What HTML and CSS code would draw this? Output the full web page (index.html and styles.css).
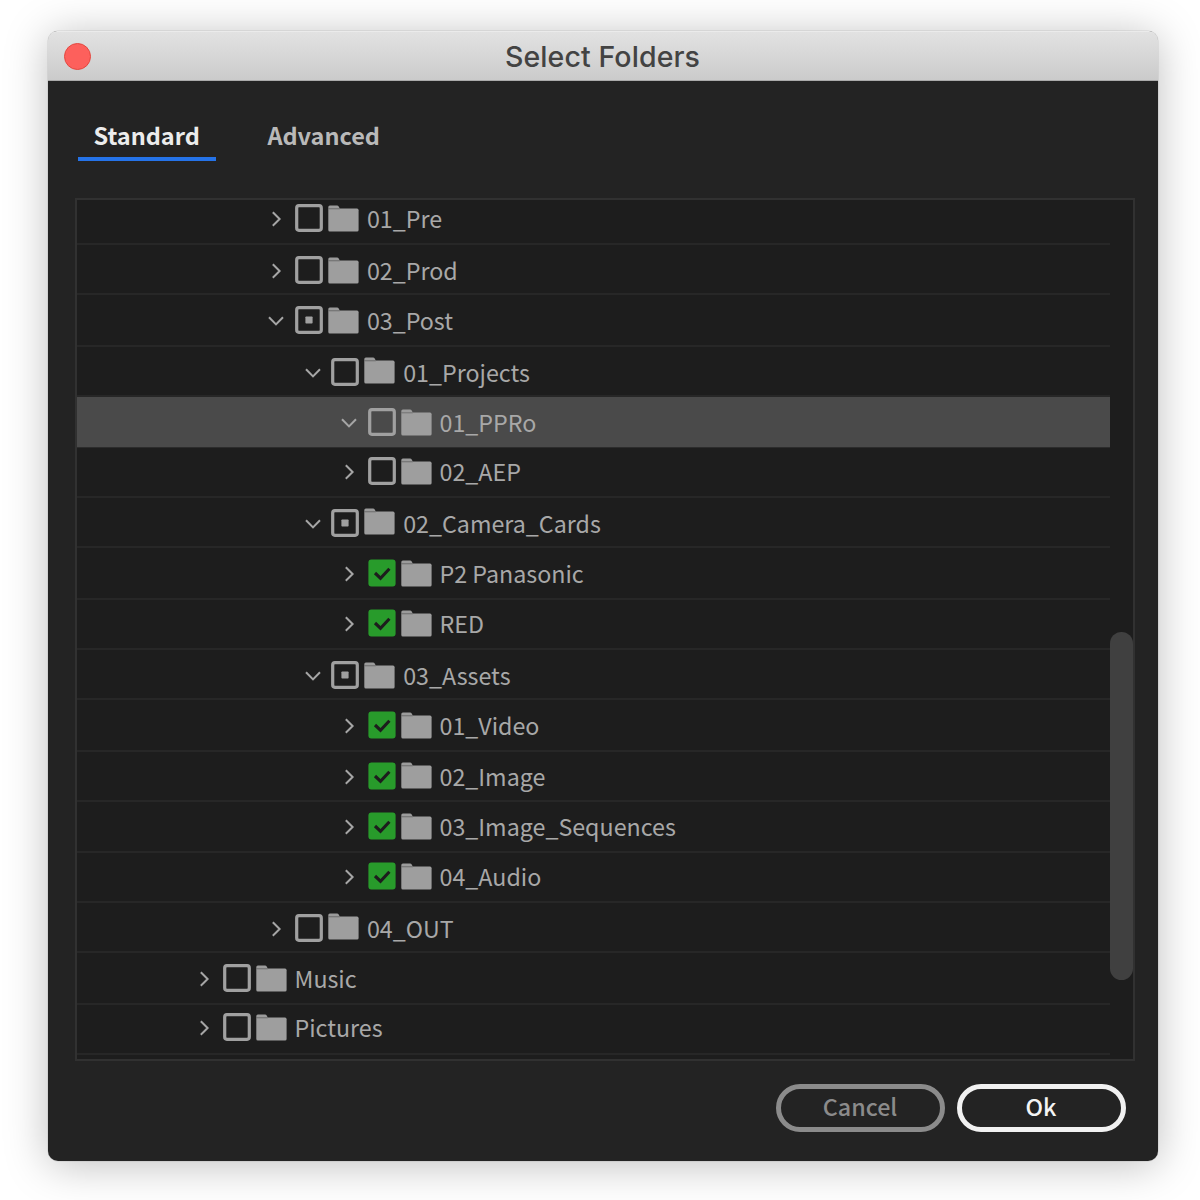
FILE: index.html
```
<!DOCTYPE html>
<html lang="en">
<head>
<meta charset="utf-8">
<title>Select Folders</title>
<link rel="stylesheet" href="styles.css">
</head>
<body>
<svg class="defs" aria-hidden="true">
  <symbol id="right" viewBox="0 0 16 16"><path d="M4.8 1.2 11.6 8l-6.8 6.8" fill="none" stroke="currentColor" stroke-width="2"/></symbol>
  <symbol id="down" viewBox="0 0 16 16"><path d="M1 4.2 8 11.4l7-7.2" fill="none" stroke="currentColor" stroke-width="2"/></symbol>
  <symbol id="empty" viewBox="0 0 28 28"><rect x="1.7" y="1.7" width="24.6" height="24.6" rx="2.2" fill="none" stroke="currentColor" stroke-width="3.2"/></symbol>
  <symbol id="mixed" viewBox="0 0 28 28"><rect x="1.7" y="1.7" width="24.6" height="24.6" rx="2.2" fill="none" stroke="currentColor" stroke-width="3.2"/><rect x="10.4" y="10.4" width="7.2" height="7.2" rx=".8" fill="currentColor"/></symbol>
  <symbol id="checked" viewBox="0 0 28 28"><rect x=".4" y=".4" width="27.2" height="27.2" rx="3" fill="#289b2b"/><path d="m7 14 5.5 5.2 8.9-9.5" fill="none" stroke="#1d1d1d" stroke-width="3.1"/></symbol>
  <symbol id="folder" viewBox="0 0 31 28"><path d="M.3 3.6V1.9Q.3.4 1.8.4h7.4q.8 0 1.2.7l1.4 2.5z" fill="#9b9b9b"/><path d="M.3 3.6H29q1.6 0 1.6 1.6V25q0 1.6-1.6 1.6H1.9Q.3 26.6.3 25z" fill="#9e9e9e"/><path d="M.3 3.9h11.5" stroke="#747474" stroke-width=".8"/></symbol>
</svg>
<main class="window">
  <header class="titlebar"><span class="close"></span><h1>Select Folders</h1></header>
  <nav class="tabs"><a class="tab active">Standard</a><a class="tab">Advanced</a></nav>
  <section class="panel">
    <ul class="tree">
      <li class="row l2"><svg class="chev"><use href="#right"/></svg><svg class="box"><use href="#empty"/></svg><svg class="folder"><use href="#folder"/></svg><span>01_Pre</span></li>
      <li class="row l2 low"><svg class="chev"><use href="#right"/></svg><svg class="box"><use href="#empty"/></svg><svg class="folder"><use href="#folder"/></svg><span>02_Prod</span></li>
      <li class="row l2"><svg class="chev"><use href="#down"/></svg><svg class="box"><use href="#mixed"/></svg><svg class="folder"><use href="#folder"/></svg><span>03_Post</span></li>
      <li class="row l3 low raised"><svg class="chev"><use href="#down"/></svg><svg class="box"><use href="#empty"/></svg><svg class="folder"><use href="#folder"/></svg><span>01_Projects</span></li>
      <li class="row l4 selected"><svg class="chev"><use href="#down"/></svg><svg class="box"><use href="#empty"/></svg><svg class="folder"><use href="#folder"/></svg><span>01_PPRo</span></li>
      <li class="row l4"><svg class="chev"><use href="#right"/></svg><svg class="box"><use href="#empty"/></svg><svg class="folder"><use href="#folder"/></svg><span>02_AEP</span></li>
      <li class="row l3 low raised"><svg class="chev"><use href="#down"/></svg><svg class="box"><use href="#mixed"/></svg><svg class="folder"><use href="#folder"/></svg><span>02_Camera_Cards</span></li>
      <li class="row l4"><svg class="chev"><use href="#right"/></svg><svg class="box"><use href="#checked"/></svg><svg class="folder"><use href="#folder"/></svg><span>P2 Panasonic</span></li>
      <li class="row l4"><svg class="chev"><use href="#right"/></svg><svg class="box"><use href="#checked"/></svg><svg class="folder"><use href="#folder"/></svg><span>RED</span></li>
      <li class="row l3 low"><svg class="chev"><use href="#down"/></svg><svg class="box"><use href="#mixed"/></svg><svg class="folder"><use href="#folder"/></svg><span>03_Assets</span></li>
      <li class="row l4"><svg class="chev"><use href="#right"/></svg><svg class="box"><use href="#checked"/></svg><svg class="folder"><use href="#folder"/></svg><span>01_Video</span></li>
      <li class="row l4 mid"><svg class="chev"><use href="#right"/></svg><svg class="box"><use href="#checked"/></svg><svg class="folder"><use href="#folder"/></svg><span>02_Image</span></li>
      <li class="row l4"><svg class="chev"><use href="#right"/></svg><svg class="box"><use href="#checked"/></svg><svg class="folder"><use href="#folder"/></svg><span>03_Image_Sequences</span></li>
      <li class="row l4"><svg class="chev"><use href="#right"/></svg><svg class="box"><use href="#checked"/></svg><svg class="folder"><use href="#folder"/></svg><span>04_Audio</span></li>
      <li class="row l2 low raised"><svg class="chev"><use href="#right"/></svg><svg class="box"><use href="#empty"/></svg><svg class="folder"><use href="#folder"/></svg><span>04_OUT</span></li>
      <li class="row l0"><svg class="chev"><use href="#right"/></svg><svg class="box"><use href="#empty"/></svg><svg class="folder"><use href="#folder"/></svg><span>Music</span></li>
      <li class="row l0 high"><svg class="chev"><use href="#right"/></svg><svg class="box"><use href="#empty"/></svg><svg class="folder"><use href="#folder"/></svg><span>Pictures</span></li>
    </ul>
    <div class="scroll"><div class="thumb"></div></div>
  </section>
  <footer class="actions"><button class="btn cancel">Cancel</button><button class="btn ok">Ok</button></footer>
</main>
</body>
</html>
```
FILE: styles.css
```
* { box-sizing: border-box; }
html, body { margin: 0; height: 1200px; overflow: hidden; background: #fff; }
body { padding: 31px 41px 39px 48px; font-family: "Noto Sans CJK SC", "Noto Sans", sans-serif; }
.defs { position: absolute; width: 0; height: 0; }
.window {
  display: flex; flex-direction: column; height: 1130px;
  border-radius: 10px; background: #232323; overflow: visible;
  width: 1110px;
  box-shadow: 0 0 0 .5px rgba(0,0,0,.12), 0 4px 44px rgba(0,0,0,.26);
}
.titlebar {
  display: grid; grid-template-columns: 28px 1fr 28px; align-items: center;
  height: 50px; padding: 0 16px; border-radius: 9px 9px 0 0;
  background: linear-gradient(#e2e2e2, #cbcbcb);
  border-top: 1px solid #ebebeb; border-bottom: 1px solid #aaa;
}
.close { width: 27px; height: 27px; border-radius: 50%; background: #fd605c; border: 1px solid #e4473f; }
.titlebar h1 {
  margin: 0; text-align: center; color: #434343;
  font: 450 28.5px/40px Inter, sans-serif; letter-spacing: .1px; padding: 1px 1px 0 0;
}
.tabs { display: flex; gap: 36px; padding: 35px 30px 0; height: 117px; }
.tab { height: 45px; padding: 0 16px 0 15.5px; font-weight: 700; font-size: 23.5px; line-height: 38px; color: #b9b9b9; }
.tab.active { color: #ececec; border-bottom: 4px solid #2573e8; }
.panel {
  display: grid; grid-template-columns: 1fr 23px; flex: none;
  width: 1060px; height: 863px; margin-left: 27px;
  border: 2px solid #313131; background: #1d1d1d; overflow: hidden;
}
.tree {
  list-style: none; margin: 0; padding: 0; display: grid;
  grid-template-rows: 45px 50px 52px 50px 51px 50px 50px 52px 50px 50px 52px 50px 51px 50px 50px 52px 50px;
}
.row {
  display: flex; align-items: flex-end; padding-bottom: 11px;
  border-bottom: 2px solid #272727; color: #a8a8a8;
}
.row.low { padding-bottom: 9px; }
.row.mid { padding-bottom: 10px; }
.row.high { padding-bottom: 12px; }
.row.selected { background: #4a4a4a; border-bottom: 1px solid #2c2c2c; }
.l0 { padding-left: 119px; }
.l2 { padding-left: 191.4px; }
.l3 { padding-left: 227.7px; }
.l4 { padding-left: 264px; }
.chev { width: 16px; height: 16px; margin: 0 10.5px 5px 0; flex: none; color: #a6a6a6; }
.box { width: 28px; height: 28px; margin-right: 5px; flex: none; color: #a0a0a0; }
.folder { width: 31px; height: 28px; margin: 0 8px -1px 0; flex: none; }
.raised .folder { margin-bottom: 1px; }
.mid .folder { margin-bottom: 0; }
.row span { font-size: 23.25px; line-height: 28px; height: 28px; }
.thumb { margin-top: 432px; height: 348px; border-radius: 12px; background: #404040; }
.actions { display: flex; justify-content: flex-end; gap: 12px; padding: 23px 32px 0 0; }
.btn {
  width: 169px; height: 48px; padding: 0 1px 4px 0; border: 5px solid; border-radius: 24px;
  background: transparent; font: 500 23.3px/34px "Noto Sans CJK SC", "Noto Sans", sans-serif;
}
.cancel { border-color: #8b8b8b; color: #8b8b8b; }
.ok { border-color: #f1f1f1; color: #f4f4f4; }
```
